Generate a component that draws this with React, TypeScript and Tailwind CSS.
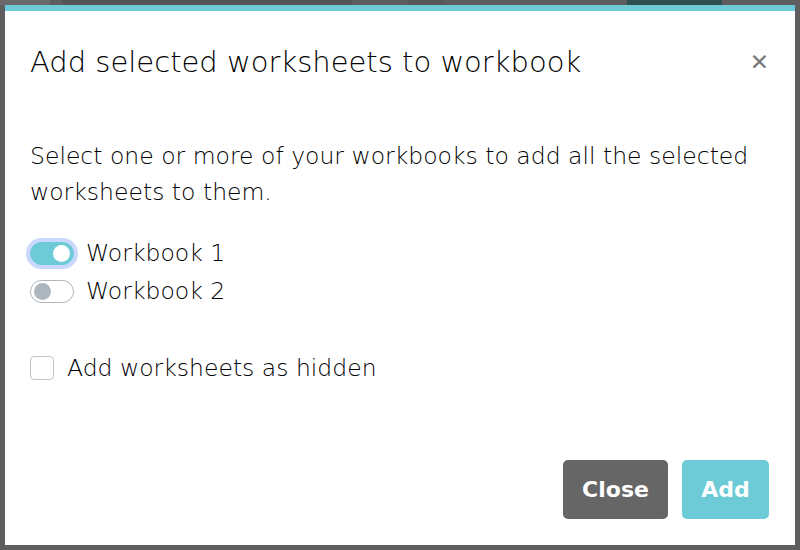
import React, { useState } from 'react'

const font = "font-['DejaVu_Sans','Noto_Sans',sans-serif]"

const Toggle = ({ on, focused, onClick }: { on: boolean; focused?: boolean; onClick: () => void }) => (
  <button
    onClick={onClick}
    className={`relative flex h-[23px] w-[44px] shrink-0 items-center rounded-full border ${
      on ? 'border-[#6ccbd6] bg-[#6ccbd6] justify-end' : 'border-[#adb5bd] bg-white justify-start'
    } ${focused ? 'ring-4 ring-[#c9d8fc]' : ''} px-[3px]`}
  >
    <span className={`block h-[17px] w-[17px] rounded-full ${on ? 'bg-white' : 'bg-[#adb5bd]'}`} />
  </button>
)

export default function App() {
  const [books, setBooks] = useState([true, false])
  const [hidden, setHidden] = useState(false)

  return (
    <div className={`relative h-[550px] w-[800px] overflow-hidden bg-[#5e5e5e] ${font}`}>
      {/* faint page behind the overlay */}
      <div className="flex h-[5px] gap-[12px]">
        <div className="w-[50px] bg-[#6a6a6a]" />
        <div className="w-[290px] bg-[#555555]" />
        <div className="w-[32px]" />
        <div className="w-[36px] bg-[#585858]" />
        <div className="flex-1" />
        <div className="mr-[78px] w-[95px] bg-[#2f4f52]" />
      </div>

      <div className="ml-[5px] flex h-[540px] w-[790px] flex-col bg-white">
        <div className="h-[6px] bg-[#6ccbd6]" />

        <div className="flex items-center justify-between pl-[25px] pr-[26px] pt-[33px]">
          <h1 className="text-[29px] leading-[36px] font-light text-black">Add selected worksheets to workbook</h1>
          <button className="text-[#777] text-[23px] font-bold leading-none">✕</button>
        </div>

        <div className="px-[25px] pt-[58px]">
          <p className="text-[23.5px] leading-[36px] text-black font-light">
            Select one or more of your workbooks to add all the selected worksheets to them.
          </p>

          <div className="mt-[31px] flex flex-col gap-[14px]">
            {['Workbook 1', 'Workbook 2'].map((name, i) => (
              <label key={name} className="flex items-center gap-[12px] text-[23.5px] leading-[24px] text-black font-light">
                <Toggle
                  on={books[i]}
                  focused={i === 0}
                  onClick={() => setBooks(books.map((b, j) => (j === i ? !b : b)))}
                />
                {name}
              </label>
            ))}
          </div>

          <label className="mt-[53px] flex items-center gap-[13px] text-[23.5px] leading-[24px] text-black font-light">
            <button
              onClick={() => setHidden(!hidden)}
              className="h-[24px] w-[24px] rounded-[4px] border border-[#c5c5c5] bg-white"
            />
            Add worksheets as hidden
          </label>
        </div>

        <div className="mt-auto flex justify-end gap-[14px] pb-[26px] pr-[26px]">
          <button className="h-[59px] w-[105px] rounded-[5px] bg-[#666666] text-[22px] font-bold text-white">Close</button>
          <button className="h-[59px] w-[87px] rounded-[5px] bg-[#6ccbd6] text-[22px] font-bold text-white">Add</button>
        </div>
      </div>
    </div>
  )
}
